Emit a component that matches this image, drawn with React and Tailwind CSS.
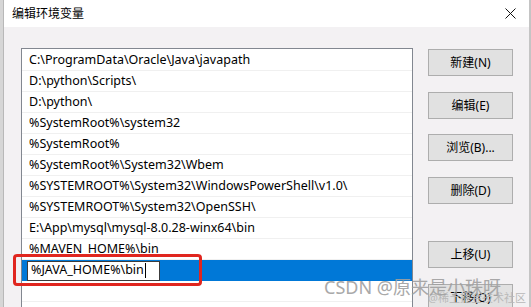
import React from "react";

const paths = [
  "C:\\ProgramData\\Oracle\\Java\\javapath",
  "D:\\python\\Scripts\\",
  "D:\\python\\",
  "%SystemRoot%\\system32",
  "%SystemRoot%",
  "%SystemRoot%\\System32\\Wbem",
  "%SYSTEMROOT%\\System32\\WindowsPowerShell\\v1.0\\",
  "%SYSTEMROOT%\\System32\\OpenSSH\\",
  "E:\\App\\mysql\\mysql-8.0.28-winx64\\bin",
  "%MAVEN_HOME%\\bin",
];

const buttons = [
  { label: "新建(N)", mt: "mt-0" },
  { label: "编辑(E)", mt: "mt-[16px]" },
  { label: "浏览(B)...", mt: "mt-[15px]" },
  { label: "删除(D)", mt: "mt-[16px]" },
  { label: "上移(U)", mt: "mt-[37px]" },
  { label: "下移(O)", mt: "mt-[16px]" },
];

const Row = ({ text }) => (
  <div className="h-[21px] border-b border-[#f0f0f0] pl-[7px] pt-px flex items-center whitespace-nowrap text-[12.5px] text-black">
    {text}
  </div>
);

const EditRow = () => (
  <div className="h-[21px] bg-[#0078d7] flex items-center">
    <div className="ml-[5px] h-[20px] w-[133px] bg-white border border-[#3c3c3c] pl-[3px] flex items-center text-[12.5px] text-black">
      %JAVA_HOME%\bin
      <span className="ml-[1px] w-px h-[15px] bg-black" />
    </div>
  </div>
);

const Btn = ({ label, mt }) => (
  <div
    className={`${mt} h-[27px] w-[85px] bg-[#e1e1e1] border border-[#adadad] flex items-center justify-center text-[12px] text-black`}
  >
    {label}
  </div>
);

export default function App() {
  return (
    <div
      className="relative w-[531px] h-[307px] overflow-hidden flex bg-[#c9c9c9]"
      style={{ fontFamily: '"Noto Sans", "Noto Sans CJK SC", sans-serif' }}
    >
      <div className="w-[3px] bg-[#d6d6d6]" />
      <div className="w-[526px] flex flex-col border-l border-[#b8b8b8]">
        <div className="h-[27px] bg-white flex items-center justify-between pl-[8px] pr-[13px] shrink-0">
          <span className="text-[12px] text-black">编辑环境变量</span>
          <svg width="11" height="11" viewBox="0 0 11 11">
            <path d="M0.5 0.5 L10.5 10.5 M10.5 0.5 L0.5 10.5" stroke="#111" strokeWidth="1" />
          </svg>
        </div>
        <div className="flex-1 bg-[#f3f1f3] flex pl-[17px] pt-[21px]">
          <div className="w-[392px] self-stretch bg-white border border-[#828790] border-b-0 pt-px">
            {paths.map((p) => (
              <Row key={p} text={p} />
            ))}
            <EditRow />
            <div className="h-[21px] border-b border-[#f0f0f0]" />
          </div>
          <div className="ml-[15px] pt-px flex flex-col">
            {buttons.map((b) => (
              <Btn key={b.label} {...b} />
            ))}
          </div>
        </div>
      </div>
      <div className="w-[2px] bg-[#c4c4c4]" />

      {/* red annotation box */}
      <div className="absolute left-[13px] top-[254px] w-[189px] h-[32px] border-[3px] border-[#e0261f] rounded-[4px]" />

      {/* watermarks */}
      <div className="absolute left-[428px] top-[290px] text-[11px] text-[#b8b8b8] whitespace-nowrap">
        @稀土掘金技术社区
      </div>
      <div className="absolute left-[324px] top-[274px] text-[18px] text-[#a0a0a0] whitespace-nowrap opacity-90">
        CSDN @原来是小珠呀
      </div>
    </div>
  );
}
